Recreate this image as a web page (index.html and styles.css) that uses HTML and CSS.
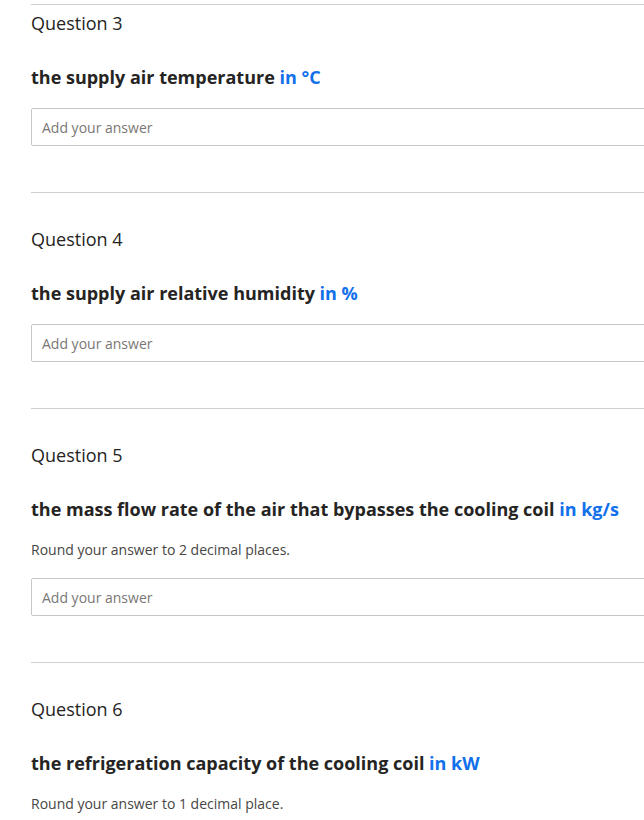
FILE: index.html
```html
<!DOCTYPE html>
<html>
<head>
<meta charset="utf-8">
<link rel="stylesheet" href="styles.css">
</head>
<body>
<div class="form">
  <section class="question first">
    <div class="q-label">Question 3</div>
    <div class="q-title">the supply air temperature <span class="unit">in °C</span></div>
    <div class="answer"><input type="text" placeholder="Add your answer"></div>
  </section>
  <section class="question">
    <div class="q-label">Question 4</div>
    <div class="q-title">the supply air relative humidity <span class="unit">in %</span></div>
    <div class="answer"><input type="text" placeholder="Add your answer"></div>
  </section>
  <section class="question">
    <div class="q-label">Question 5</div>
    <div class="q-title">the mass flow rate of the air that bypasses the cooling coil <span class="unit">in kg/s</span></div>
    <div class="q-note">Round your answer to 2 decimal places.</div>
    <div class="answer"><input type="text" placeholder="Add your answer"></div>
  </section>
  <section class="question last">
    <div class="q-label">Question 6</div>
    <div class="q-title">the refrigeration capacity of the cooling coil <span class="unit">in kW</span></div>
    <div class="q-note">Round your answer to 1 decimal place.</div>
  </section>
</div>
</body>
</html>
```

FILE: styles.css
```css
html, body {
  margin: 0;
  padding: 0;
  background: #ffffff;
}
body {
  font-family: "Open Sans", "Noto Sans", sans-serif;
  color: #252423;
  overflow: hidden;
}
.form {
  padding-top: 4px;
  padding-left: 31px;
  overflow: hidden;
}
.question {
  border-top: 1px solid #d2d0ce;
  padding-top: 34px;
  padding-bottom: 46px;
  display: flex;
  flex-direction: column;
}
.question.first {
  padding-top: 6px;
}
.question.last {
  padding-bottom: 4px;
}
.q-label {
  font-size: 18px;
  line-height: 24px;
  color: #252423;
  margin-bottom: 30px;
}
.q-title {
  font-size: 18px;
  line-height: 24px;
  font-weight: 700;
  color: #252423;
  white-space: nowrap;
  margin-bottom: 19px;
}
.unit {
  color: #1170ea;
}
.q-note {
  font-size: 14px;
  line-height: 18px;
  color: #484644;
  margin-top: 1px;
  margin-bottom: 19px;
}
.question.last .q-note {
  margin-bottom: 0;
}
.answer {
  margin-right: -40px;
}
.answer input {
  display: block;
  box-sizing: border-box;
  width: 100%;
  height: 38px;
  border: 1px solid #c8c6c4;
  border-radius: 2px;
  padding: 0 10px;
  font-family: "Open Sans", "Noto Sans", sans-serif;
  font-size: 14px;
  color: #252423;
  background: #fff;
  outline: none;
}
.answer input::placeholder {
  color: #7a7775;
}
```
